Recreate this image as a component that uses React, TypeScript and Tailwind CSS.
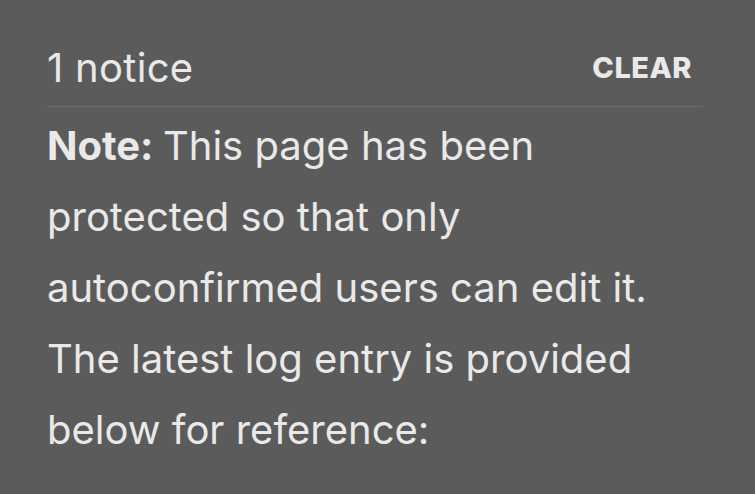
import React from 'react';

const App: React.FC = () => {
  return (
    <div className="h-[494px] w-[755px] overflow-hidden bg-[#5b5b5b] text-[#e9e9e9]" style={{ fontFamily: 'Inter, "Noto Sans", sans-serif' }}>
      <div className="ml-[47px] w-[656px] pt-[42px]">
        <div className="flex h-[65px] items-start justify-between border-b border-[#6c6c6c]">
          <span className="text-[40px] leading-[52px] tracking-[0.3px]">1 notice</span>
          <button className="mr-[11px] text-[29px] font-extrabold leading-[52px] tracking-[0.5px]">CLEAR</button>
        </div>
        <p className="mt-[3px] w-[640px] text-[40px] leading-[71px]">
          <span className="font-bold">Note: </span>This page has been protected so that only autoconfirmed users can edit it. The latest log entry is provided below for reference:
        </p>
      </div>
    </div>
  );
};

export default App;
